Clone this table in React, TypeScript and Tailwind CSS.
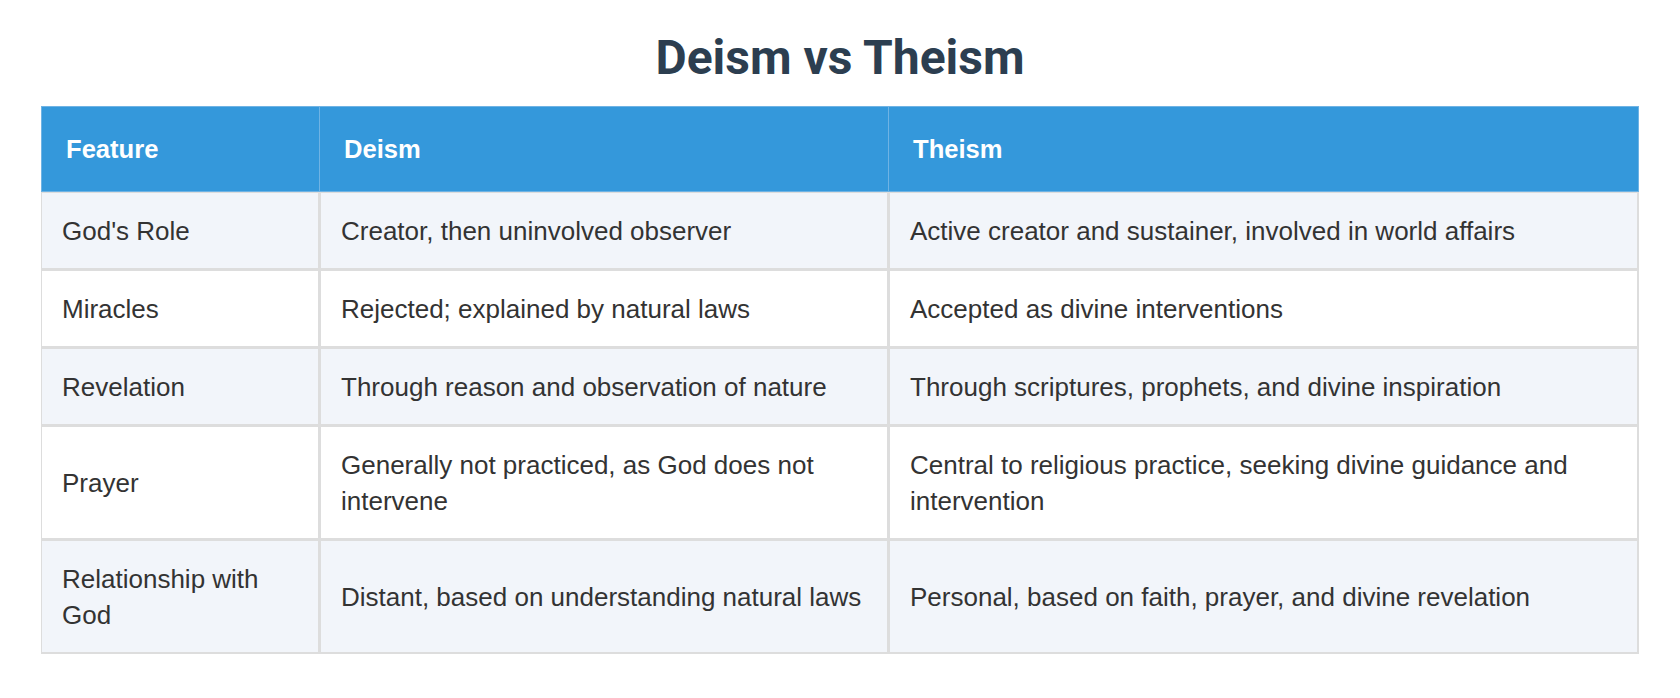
import React from 'react';

const rows = [
  {
    feature: "God's Role",
    deism: 'Creator, then uninvolved observer',
    theism: 'Active creator and sustainer, involved in world affairs',
  },
  {
    feature: 'Miracles',
    deism: 'Rejected; explained by natural laws',
    theism: 'Accepted as divine interventions',
  },
  {
    feature: 'Revelation',
    deism: 'Through reason and observation of nature',
    theism: 'Through scriptures, prophets, and divine inspiration',
  },
  {
    feature: 'Prayer',
    deism: 'Generally not practiced, as God does not intervene',
    theism: 'Central to religious practice, seeking divine guidance and intervention',
  },
  {
    feature: 'Relationship with God',
    deism: 'Distant, based on understanding natural laws',
    theism: 'Personal, based on faith, prayer, and divine revelation',
  },
];

const App: React.FC = () => {
  return (
    <div className="min-h-screen bg-white pt-[34px] font-['Liberation_Sans',Arial,sans-serif]">
      {/* Title */}
      <h1 className="mb-[24px] text-center font-['Roboto',sans-serif] text-[48px] font-bold leading-[48px] text-[#2c3e50]">
        Deism vs Theism
      </h1>

      {/* Comparison table */}
      <table className="mx-auto w-[1598px] table-fixed border-separate border-spacing-0 text-[26px] leading-[36px] text-[#333333]">
        <colgroup>
          <col className="w-[279px]" />
          <col className="w-[569px]" />
          <col />
        </colgroup>
        <thead>
          <tr className="bg-[#3498db] text-left text-white">
            <th className="border border-[#6fb3e4] px-6 py-[24px] text-[25.6px] font-bold">Feature</th>
            <th className="border border-l-0 border-[#6fb3e4] px-6 py-[24px] text-[25.6px] font-bold">Deism</th>
            <th className="border border-l-0 border-[#6fb3e4] px-6 py-[24px] text-[25.6px] font-bold">Theism</th>
          </tr>
        </thead>
        <tbody>
          {rows.map((row, i) => (
            <tr key={i} className={i % 2 === 0 ? 'bg-[#f2f5fa]' : 'bg-white'}>
              <td className="border-b-2 border-l border-r-2 border-t border-[#dddddd] px-5 pb-[19px] pt-5 align-middle">
                {row.feature}
              </td>
              <td className="border-b-2 border-l border-r-2 border-t border-[#dddddd] px-5 pb-[19px] pt-5 align-middle">
                {row.deism}
              </td>
              <td className="border-b-2 border-l border-r-2 border-t border-[#dddddd] px-5 pb-[19px] pt-5 align-middle">
                {row.theism}
              </td>
            </tr>
          ))}
        </tbody>
      </table>
    </div>
  );
};

export default App;
